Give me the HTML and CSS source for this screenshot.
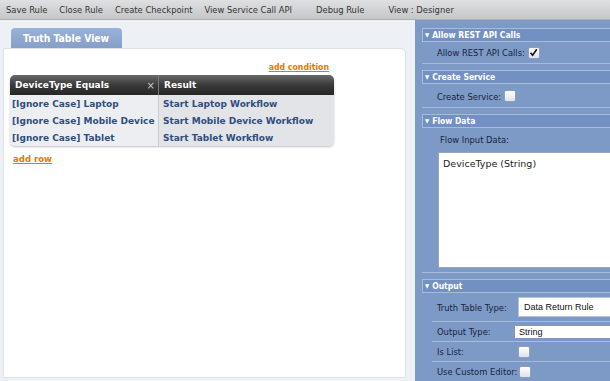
FILE: index.html
```html
<!DOCTYPE html>
<html>
<head>
<meta charset="utf-8">
<link rel="stylesheet" href="styles.css">
</head>
<body>
<div class="toolbar">
  <span class="tb-item">Save Rule</span>
  <span class="tb-item">Close Rule</span>
  <span class="tb-item">Create Checkpoint</span>
  <span class="tb-item">View Service Call API</span>
  <span class="tb-item tb-sep">Debug Rule</span>
  <span class="tb-item tb-sep">View : Designer</span>
</div>
<div class="main">
  <div class="left">
    <div class="tab">Truth Table View</div>
    <div class="panel">
      <div class="table-area">
        <div class="add-cond"><a class="link">add condition</a></div>
        <div class="tt-box">
          <table class="tt">
            <thead>
              <tr><th class="c1">DeviceType Equals<span class="close">×</span></th><th class="c2">Result</th></tr>
            </thead>
            <tbody>
              <tr><td class="c1">[Ignore Case] Laptop</td><td class="c2">Start Laptop Workflow</td></tr>
              <tr><td class="c1">[Ignore Case] Mobile Device</td><td class="c2">Start Mobile Device Workflow</td></tr>
              <tr><td class="c1">[Ignore Case] Tablet</td><td class="c2">Start Tablet Workflow</td></tr>
            </tbody>
          </table>
        </div>
        <div class="add-row"><a class="link">add row</a></div>
      </div>
    </div>
  </div>
  <div class="right">
    <div class="section">
      <div class="sec-head"><span class="tri">▼</span>Allow REST API Calls</div>
      <div class="sec-body"><span class="lbl">Allow REST API Calls:</span><span class="cb"><svg width="9" height="9" viewBox="0 0 9 9"><path d="M1.5 4.8 L3.6 7.3 L7.8 1.2" fill="none" stroke="#111" stroke-width="1.6"/></svg></span></div>
    </div>
    <div class="section">
      <div class="sec-head"><span class="tri">▼</span>Create Service</div>
      <div class="sec-body tall"><span class="lbl">Create Service:</span><span class="cb"></span></div>
    </div>
    <div class="section">
      <div class="sec-head"><span class="tri">▼</span>Flow Data</div>
      <div class="sec-body flow">
        <div class="lbl flow-lbl">Flow Input Data:</div>
        <div class="textarea">DeviceType (String)</div>
      </div>
    </div>
    <div class="section">
      <div class="sec-head"><span class="tri">▼</span>Output</div>
      <div class="out-body">
        <div class="orow first"><span class="lbl olbl">Truth Table Type:</span><span class="select">Data Return Rule</span></div>
        <div class="orow"><span class="lbl olbl">Output Type:</span><span class="input">String</span></div>
        <div class="orow"><span class="lbl olbl">Is List:</span><span class="cb ocb"></span></div>
        <div class="orow"><span class="lbl olbl">Use Custom Editor:</span><span class="cb ocb2"></span></div>
      </div>
    </div>
  </div>
</div>
</body>
</html>
```

FILE: styles.css
```css
html, body {
  margin: 0;
  padding: 0;
}
body {
  width: 610px;
  height: 381px;
  overflow: hidden;
  background: #edf0f4;
  font-family: "DejaVu Sans", Verdana, sans-serif;
}
.toolbar {
  height: 19px;
  border-bottom: 1px solid #aeb0b3;
  background: linear-gradient(#dfe0e1, #c5c6c8);
  display: flex;
  align-items: center;
  padding-left: 6px;
  gap: 12px;
  font-size: 9.3px;
  font-stretch: semi-condensed;
  color: #333;
  white-space: nowrap;
}
.tb-sep {
  margin-left: 12px;
}
.main {
  display: flex;
  height: 361px;
}
.left {
  width: 415px;
  flex: none;
  display: flex;
  flex-direction: column;
  padding-top: 8px;
  box-sizing: border-box;
}
.tab {
  margin-left: 11px;
  width: 111px;
  height: 20px;
  box-sizing: border-box;
  padding-left: 12px;
  background: linear-gradient(#9ab2d7, #859fc9);
  border-radius: 4px 4px 0 0;
  color: #fff;
  font-weight: bold;
  font-size: 10.3px;
  font-stretch: semi-condensed;
  line-height: 20px;
}
.panel {
  margin-left: 3px;
  width: 403px;
  flex: 1;
  margin-bottom: 3px;
  box-sizing: border-box;
  background: #fff;
  border: 1px solid #dde2e8;
  border-radius: 0 6px 0 0;
  padding: 10px 0 0 6px;
}
.table-area {
  width: 324px;
}
.add-cond {
  text-align: right;
  padding-right: 5px;
  line-height: 12px;
  height: 12px;
}
.link {
  color: #e07a00;
  font-weight: bold;
  font-size: 8.7px;
  font-stretch: semi-condensed;
  text-decoration: underline;
}
.add-row .link {
  font-size: 9.5px;
}
.tt-box {
  margin-top: 4px;
  border-radius: 5px;
  overflow: hidden;
  box-shadow: 0 1px 2px rgba(0, 0, 0, 0.25);
}
.tt {
  width: 324px;
  border-collapse: separate;
  border-spacing: 0;
  font-size: 9px;
  font-weight: bold;
  table-layout: fixed;
}
.tt th {
  height: 20px;
  padding: 0 0 0 5px;
  text-align: left;
  color: #fff;
  background: linear-gradient(#6a6a6a, #3a3a3a 50%, #262626);
}
.tt th.c1 {
  width: 143px;
  border-right: 1px solid #777;
}
.close {
  float: right;
  margin-right: 3px;
  color: #c8c8c8;
  font-size: 10px;
  font-weight: normal;
}
.tt td {
  height: 17px;
  padding: 0 0 0 2px;
  color: #2f4e7e;
  white-space: nowrap;
  overflow: hidden;
}
.tt td.c1 {
  background: #eceef1;
  border-right: 1px solid #c9cdd3;
}
.tt td.c2 {
  background: #e2e4e8;
  padding-left: 4px;
}
.add-row {
  margin-top: 5px;
  padding-left: 3px;
  line-height: 12px;
}
.right {
  flex: 1;
  min-width: 0;
  background: #7d99c6;
  padding: 8px 0 0 7px;
  font-family: "DejaVu Sans", Verdana, sans-serif;
  font-stretch: semi-condensed;
}
.section {
  margin-bottom: 6px;
}
.sec-head {
  height: 12px;
  line-height: 12px;
  border-top: 1px solid #a9bbda;
  border-bottom: 1px solid #a9bbda;
  border-left: 1px solid #a9bbda;
  background: #7290c2;
  color: #fff;
  font-weight: bold;
  font-size: 8.5px;
  padding-left: 2px;
}
.tri {
  font-size: 6px;
  margin-right: 3px;
  position: relative;
  top: -1px;
}
.sec-body {
  height: 21px;
  border-bottom: 1px solid #a9bbda;
  display: flex;
  align-items: center;
  padding-left: 15px;
}
.sec-body.tall {
  height: 22px;
  padding-top: 1px;
}
.lbl {
  font-size: 9.3px;
  color: #17243a;
  white-space: nowrap;
}
.cb {
  display: inline-flex;
  align-items: center;
  justify-content: center;
  flex: none;
  width: 10px;
  height: 10px;
  margin-left: 3px;
  border: 1px solid #8ea0be;
  border-radius: 2px;
  background: linear-gradient(#ffffff, #dde3ec);
}
.sec-body.flow {
  height: auto;
  display: block;
  padding: 6px 0 4px 16px;
}
.flow-lbl {
  line-height: 12px;
  padding-left: 2px;
}
.textarea {
  margin-top: 6px;
  height: 109px;
  background: #fff;
  border: 1px solid #96a9ca;
  border-right: none;
  padding: 5px 0 0 4px;
  font-size: 9.5px;
  font-stretch: normal;
  color: #222;
}
.orow {
  margin-left: 10px;
  height: 19px;
  border-bottom: 1px solid #a9bbda;
  display: flex;
  align-items: center;
  padding-left: 5px;
}
.orow.first {
  height: 28px;
}
.olbl {
  min-width: 78px;
  flex: none;
}
.select {
  flex: 1;
  height: 18px;
  margin-left: 3px;
  background: #fff;
  border: 1px solid #b8c4d8;
  border-right: none;
  font-family: "Liberation Sans", Arial, sans-serif;
  font-size: 9px;
  line-height: 18px;
  padding-left: 5px;
  color: #111;
}
.input {
  flex: 1;
  height: 12px;
  background: #fff;
  font-family: "Liberation Sans", Arial, sans-serif;
  font-size: 9px;
  line-height: 12px;
  padding-left: 4px;
  color: #111;
}
.ocb {
  margin-left: 3px;
}
.ocb2 {
  margin-left: 2px;
}
```
